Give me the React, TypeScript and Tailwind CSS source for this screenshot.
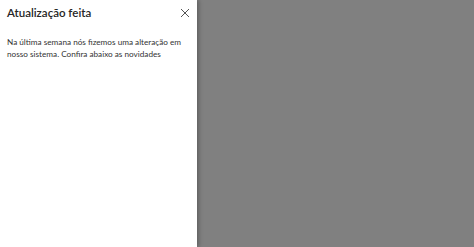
const App = () => {
  return (
    <div className="flex h-screen w-full bg-[#808080] font-['Lato',sans-serif]">
      <div className="w-[197px] h-full bg-white shadow-[2px_0_4px_rgba(0,0,0,0.25)] flex flex-col">
        <div className="flex items-center justify-between pl-[7px] pr-[7px] pt-[5px]">
          <h2 className="text-[11.5px] font-semibold text-[#252525] leading-[16px]">Atualização feita</h2>
          <svg width="10" height="10" viewBox="0 0 10 10" className="text-[#555]">
            <path d="M1 1L9 9M9 1L1 9" stroke="currentColor" strokeWidth="1" fill="none" />
          </svg>
        </div>
        <p className="pl-[7px] pr-[4px] mt-[15px] text-[8.2px] leading-[12px] text-[#333]">
          Na última semana nós fizemos uma alteração em nosso sistema. Confira abaixo as novidades
        </p>
      </div>
      <div className="flex-1" />
    </div>
  );
};

export default App;
